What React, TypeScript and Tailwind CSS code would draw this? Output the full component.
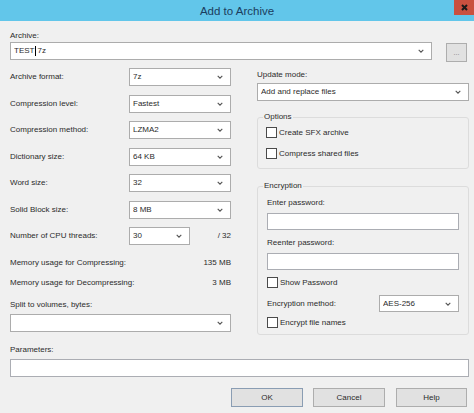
import React from 'react';

function Chevron() {
    return (
        <svg width="6" height="4" viewBox="0 0 6 4" className="shrink-0">
            <polyline points="0.7,0.8 3,3.2 5.3,0.8" fill="none" stroke="#555555" strokeWidth="1.1" />
        </svg>
    );
}

function Combo({ text, className }: { text?: React.ReactNode, className: string }) {
    return (
        <div className={`flex items-center bg-white border border-[#acacac] pl-[3px] pr-[7px] ${className}`}>
            <span className="flex-1 flex items-center whitespace-nowrap overflow-hidden">{text}</span>
            <Chevron />
        </div>
    );
}

function Check({ label }: { label: string }) {
    return (
        <div className="flex items-center h-[11px]">
            <div className="w-[11px] h-[11px] bg-white border border-[#4a4a4a] shrink-0" />
            <span className="ml-[2px]">{label}</span>
        </div>
    );
}

function Btn({ label, className }: { label: string, className: string }) {
    return (
        <button className={`h-[19px] bg-[#e1e1e1] border flex items-center justify-center ${className}`}>
            {label}
        </button>
    );
}

const rows = [
    ['Archive format:', '7z'],
    ['Compression level:', 'Fastest'],
    ['Compression method:', 'LZMA2'],
    ['Dictionary size:', '64 KB'],
    ['Word size:', '32'],
    ['Solid Block size:', '8 MB'],
];

export default function App() {
    return (
        <div className="w-[474px] h-[413px] bg-[#f0f0f0] flex flex-col overflow-hidden text-[8px] leading-[10px] text-[#2b2b2b] font-['Liberation_Sans',Arial,sans-serif]">
            {/* title bar */}
            <div className="relative h-[21px] shrink-0 bg-[#62c6ea] flex items-center justify-center text-[11.5px] leading-[14px] text-[#1b3d5e]">
                Add to Archive
                <div className="absolute right-0 top-0 w-[20px] h-[15px] bg-[#c9503f] flex items-center justify-center">
                    <svg width="7" height="7" viewBox="0 0 7 7">
                        <path d="M1 1 L6 6 M6 1 L1 6" stroke="#1a1a1a" strokeWidth="2" />
                    </svg>
                </div>
            </div>

            <div className="flex flex-col pl-[10px] pr-[5px]">
                <div className="mt-[10px]">Archive:</div>
                <div className="flex items-start mt-[1px]">
                    <Combo
                        className="w-[422px] h-[18px]"
                        text={<>TEST<span className="inline-block w-[1px] h-[10px] bg-black mx-[1px]" />7z</>}
                    />
                    <button className="ml-auto mr-[2px] mt-[1px] w-[21px] h-[19px] bg-[#e1e1e1] border border-[#adadad] text-[7px] text-[#777] flex items-center justify-center">
                        ...
                    </button>
                </div>

                <div className="flex gap-[26px]">
                    {/* left column */}
                    <div className="w-[221px] flex flex-col">
                        <div className="mt-[6px] flex flex-col gap-[8.5px]">
                            {rows.map(([label, value]) => (
                                <div key={label} className="flex items-center h-[18px]">
                                    <span className="flex-1">{label}</span>
                                    <Combo className="w-[102px] h-[18px]" text={value} />
                                </div>
                            ))}
                            <div className="flex items-center h-[18px]">
                                <span className="flex-1">Number of CPU threads:</span>
                                <Combo className="w-[61px] h-[18px]" text="30" />
                                <span className="w-[41px] text-right">/ 32</span>
                            </div>
                        </div>
                        <div className="mt-[13px] flex justify-between">
                            <span>Memory usage for Compressing:</span>
                            <span>135 MB</span>
                        </div>
                        <div className="mt-[10px] flex justify-between">
                            <span>Memory usage for Decompressing:</span>
                            <span>3 MB</span>
                        </div>
                        <div className="mt-[12px]">Split to volumes, bytes:</div>
                        <Combo className="mt-[4px] w-full h-[18px]" />
                    </div>

                    {/* right column */}
                    <div className="w-[212px] flex flex-col">
                        <div className="mt-[8px]">Update mode:</div>
                        <Combo className="mt-[3px] w-full h-[18px]" text="Add and replace files" />

                        <fieldset className="mt-[11px] border border-[#dcdcdc] rounded-[3px] min-w-0">
                            <legend className="ml-[5px] px-[1px]">Options</legend>
                            <div className="flex flex-col gap-[10px] pt-[5px] pb-[9px] pl-[8px]">
                                <Check label="Create SFX archive" />
                                <Check label="Compress shared files" />
                            </div>
                        </fieldset>

                        <fieldset className="mt-[12px] border border-[#dcdcdc] rounded-[3px] min-w-0">
                            <legend className="ml-[5px] px-[1px]">Encryption</legend>
                            <div className="flex flex-col pt-[7px] pb-[6px] pl-[9px] pr-[9px]">
                                <div>Enter password:</div>
                                <div className="mt-[5px] h-[17px] bg-white border border-[#abadb3]" />
                                <div className="mt-[8px]">Reenter password:</div>
                                <div className="mt-[5px] h-[17px] bg-white border border-[#abadb3]" />
                                <div className="mt-[7px]">
                                    <Check label="Show Password" />
                                </div>
                                <div className="mt-[7px] flex items-center justify-between h-[17px]">
                                    <span>Encryption method:</span>
                                    <Combo className="w-[80px] h-[17px]" text="AES-256" />
                                </div>
                                <div className="mt-[5px]">
                                    <Check label="Encrypt file names" />
                                </div>
                            </div>
                        </fieldset>
                    </div>
                </div>

                <div className="mt-[10px]">Parameters:</div>
                <div className="mt-[4px] h-[18px] bg-white border border-[#abadb3]" />

                <div className="mt-[11px] flex justify-end pr-[2px]">
                    <Btn label="OK" className="w-[72px] border-[#8a9db3]" />
                    <Btn label="Cancel" className="ml-[10px] w-[72px] border-[#adadad]" />
                    <Btn label="Help" className="ml-[11px] w-[71px] border-[#adadad]" />
                </div>
            </div>
        </div>
    );
}
